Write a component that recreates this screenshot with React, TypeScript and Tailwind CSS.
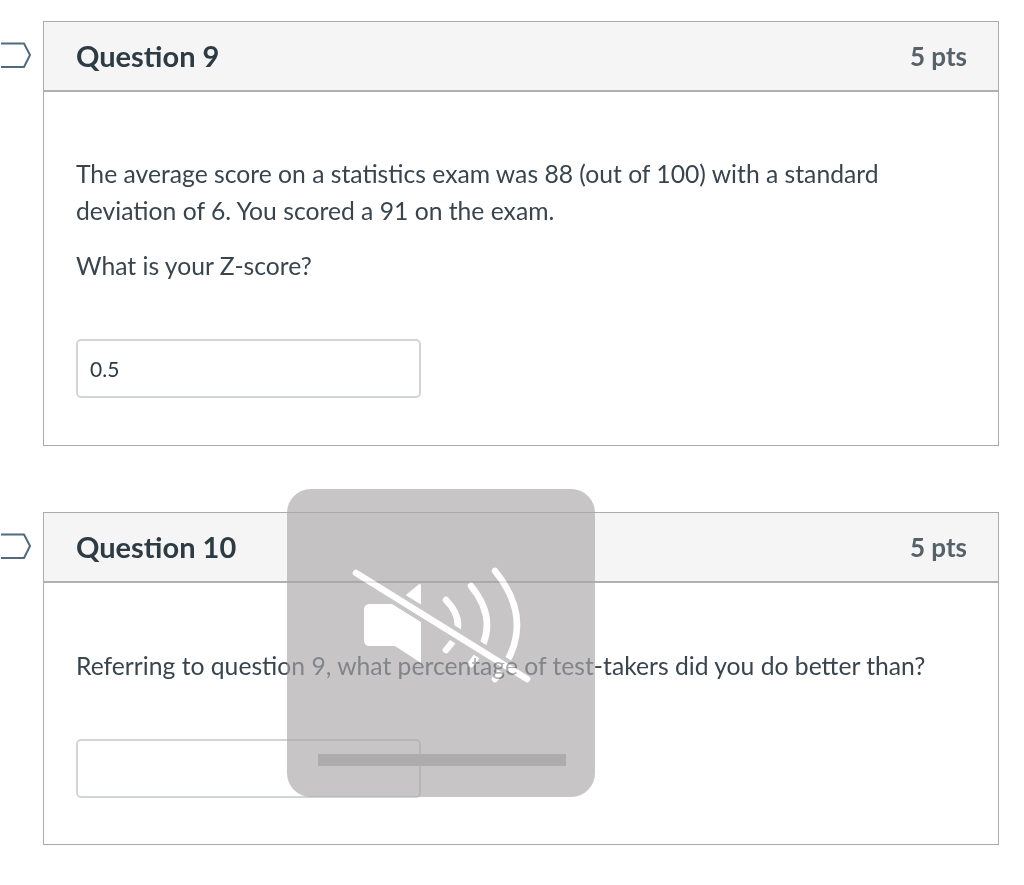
const QuestionFlag = () => (
  <svg className="absolute left-[-43px] top-[20px]" width="31" height="27" viewBox="0 0 31 27" fill="none">
    <path d="M-4 1.5H23L29 13L23 25H-4Z" fill="#fff" stroke="#4f6b80" strokeWidth="2" strokeLinejoin="round" />
  </svg>
);

const QuestionCard = ({ title, height, children }: { title: string; height: string; children: React.ReactNode }) => (
  <div className={`relative border border-[#ababab] ${height} flex flex-col`}>
    <QuestionFlag />
    <div className="h-[70px] shrink-0 flex items-center justify-between pl-[32px] pr-[31px] bg-[#f5f5f5] border-b-2 border-[#b0b0b0]">
      <h2 className="text-[29px] font-bold text-[#2d3b45] -mt-[1px]">{title}</h2>
      <span className="text-[26px] font-bold text-[#56616a]">5 pts</span>
    </div>
    <div className="flex-1 px-[32px] text-[24.7px] text-[#38454e] leading-[37px]">{children}</div>
  </div>
);

const AnswerBox = ({ value }: { value?: string }) => (
  <div className="w-[345px] h-[59px] border-2 border-[#d2d5d7] rounded-[5px] bg-white flex items-center px-[12px] text-[21px] text-[#2d3b45]">
    {value}
  </div>
);

const MutedOverlay = () => (
  <div className="absolute left-[287px] top-[489px] w-[308px] h-[308px] rounded-[24px] bg-[#a9a6a8]/65 flex flex-col items-center">
    <svg className="mt-[76px] mix-blend-color-dodge" width="180" height="120" viewBox="0 0 180 120" fill="none">
      <defs>
        <mask id="mute-cut" maskUnits="userSpaceOnUse" x="0" y="0" width="180" height="120">
          <rect width="180" height="120" fill="#fff" />
          <path d="M5 8L176 114" stroke="#000" strokeWidth="15" />
        </mask>
      </defs>
      <g mask="url(#mute-cut)">
        <path d="M13 45C13 41 15 39 19 39H44L67 20C69 18 70 19 70 21V98L44 81H19C15 81 13 79 13 75Z" fill="#424242" />
        <path d="M95 35Q119 60 95 85" stroke="#424242" strokeWidth="6.5" strokeLinecap="round" />
        <path d="M120 21Q152 60 120 99" stroke="#424242" strokeWidth="6.5" strokeLinecap="round" />
        <path d="M144 6Q188 60 144 114" stroke="#424242" strokeWidth="6.5" strokeLinecap="round" />
      </g>
      <path d="M5 8L176 114" stroke="#424242" strokeWidth="6.5" strokeLinecap="round" />
    </svg>
    <div className="w-[248px] h-[12px] bg-[#aeacad] mt-[69px] ml-[2px]" />
  </div>
);

export default function App() {
  return (
    <div className="relative h-[885px] bg-white pt-[21px] pl-[43px] pr-[25px] overflow-hidden font-['Lato','Liberation_Sans',sans-serif]">
      <QuestionCard title="Question 9" height="h-[425px]">
        <p className="mt-[63px]">
          The average score on a statistics exam was 88 (out of 100) with a standard deviation of 6. You scored a 91 on the exam.
        </p>
        <p className="mt-[18px]">What is your Z-score?</p>
        <div className="mt-[55px]">
          <AnswerBox value="0.5" />
        </div>
      </QuestionCard>
      <div className="mt-[66px]">
        <QuestionCard title="Question 10" height="h-[333px]">
          <p className="mt-[64px]">Referring to question 9, what percentage of test-takers did you do better than?</p>
          <div className="mt-[55px]">
            <AnswerBox />
          </div>
        </QuestionCard>
      </div>
      <MutedOverlay />
    </div>
  );
}
